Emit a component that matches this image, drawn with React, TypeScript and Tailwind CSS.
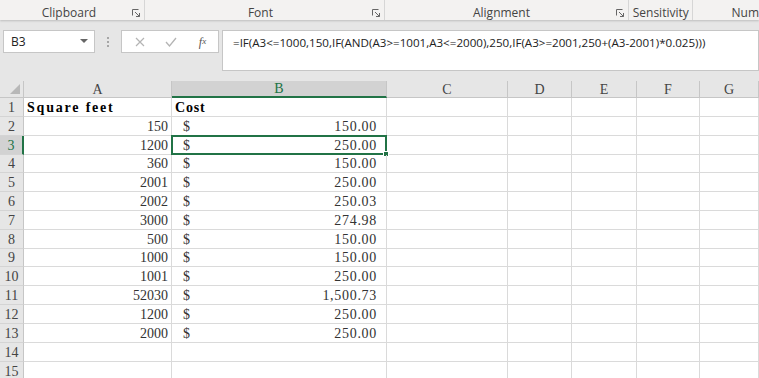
import React from 'react';

const cols = ['A', 'B', 'C', 'D', 'E', 'F', 'G'];
const colW = ['w-[148px]', 'w-[215px]', 'w-[121px]', 'w-[64px]', 'w-[65px]', 'w-[63px]', 'w-[59px]'];
const rowH = [
  'h-[19px]', 'h-[19px]', 'h-[19px]', 'h-[18px]', 'h-[19px]', 'h-[19px]', 'h-[19px]',
  'h-[19px]', 'h-[18px]', 'h-[19px]', 'h-[19px]', 'h-[19px]', 'h-[19px]', 'h-[19px]', 'h-[19px]',
];

const data: [string, string][] = [
  ['150', '150.00'],
  ['1200', '250.00'],
  ['360', '150.00'],
  ['2001', '250.00'],
  ['2002', '250.03'],
  ['3000', '274.98'],
  ['500', '150.00'],
  ['1000', '150.00'],
  ['1001', '250.00'],
  ['52030', '1,500.73'],
  ['1200', '250.00'],
  ['2000', '250.00'],
];

const serif = { fontFamily: '"Liberation Serif", "Times New Roman", serif' };
const ui = { fontFamily: '"Segoe UI", "Open Sans", "Noto Sans", sans-serif' };

function Launcher() {
  return (
    <svg width="9" height="9" viewBox="0 0 9 9" className="text-[#666]">
      <path d="M0.5 0.5h6M0.5 0.5v6" stroke="currentColor" fill="none" />
      <path d="M3 3l4.5 4.5M4 7.5h3.5V4" stroke="currentColor" fill="none" />
    </svg>
  );
}

function Ribbon() {
  return (
    <div className="flex h-[20px] bg-[#f3f2f1] text-[12px] text-[#444] shadow-[0_1px_2px_rgba(0,0,0,0.18)] relative" style={ui}>
      <div className="w-[146px] flex items-center border-r border-[#d6d6d6] pr-[3px] pt-[6px]">
        <span className="flex-1 text-center pl-[6px]">Clipboard</span>
        <Launcher />
      </div>
      <div className="w-[242px] flex items-center border-r border-[#d6d6d6] pr-[3px] pt-[6px]">
        <span className="flex-1 text-center pl-[4px]">Font</span>
        <Launcher />
      </div>
      <div className="w-[246px] flex items-center border-r border-[#d6d6d6] pr-[3px] pt-[6px]">
        <span className="flex-1 text-center pl-[2px]">Alignment</span>
        <Launcher />
      </div>
      <div className="w-[65px] flex items-center justify-center border-r border-[#d6d6d6] pt-[6px]">
        Sensitivity
      </div>
      <div className="flex-1 flex items-center pl-[38px] pt-[6px]">Num</div>
    </div>
  );
}

function FormulaBar() {
  return (
    <div className="flex items-start h-[61px] pt-[10px] pl-[3px] bg-[#e6e6e6] text-[12px] text-[#222]" style={ui}>
      <div className="w-[92px] h-[23px] bg-white border border-[#c6c6c6] flex items-center pl-[7px] pr-[6px]">
        <span className="flex-1">B3</span>
        <svg width="8" height="5" viewBox="0 0 8 5">
          <path d="M0 0h8L4 4z" fill="#666" />
        </svg>
      </div>
      <div className="w-[26px] h-[23px] flex flex-col items-center justify-center gap-[2px]">
        <span className="w-[2px] h-[2px] bg-[#a6a6a6]" />
        <span className="w-[2px] h-[2px] bg-[#a6a6a6]" />
        <span className="w-[2px] h-[2px] bg-[#a6a6a6]" />
      </div>
      <div className="w-[98px] h-[23px] bg-white border border-[#c6c6c6] flex items-center">
        <div className="w-[33px] flex justify-center pl-[2px]">
          <svg width="10" height="10" viewBox="0 0 10 10">
            <path d="M1 1l8 8M9 1l-8 8" stroke="#b4b4b4" strokeWidth="1.2" />
          </svg>
        </div>
        <div className="w-[32px] flex justify-center">
          <svg width="12" height="10" viewBox="0 0 12 10">
            <path d="M1 5l3.5 4L11 1" stroke="#b4b4b4" strokeWidth="1.3" fill="none" />
          </svg>
        </div>
        <div className="w-[31px] flex justify-center text-[#555] italic text-[12px]" style={serif}>
          f<span className="text-[9px] relative top-[2px]">x</span>
        </div>
      </div>
      <div className="ml-[3px] flex-1 h-[41px] bg-white border border-[#c6c6c6] pl-[10px] pt-[3px] text-[11.6px] text-[#222] whitespace-nowrap">
        =IF(A3&lt;=1000,150,IF(AND(A3&gt;=1001,A3&lt;=2000),250,IF(A3&gt;=2001,250+(A3-2001)*0.025)))
      </div>
    </div>
  );
}

function Sheet() {
  return (
    <div className="bg-white" style={serif}>
      <div className="flex h-[17px] bg-[#e6e6e6] text-[14px] text-[#444]">
        <div className="w-[24px] border-r border-b border-[#c6c6c6] relative">
          <svg width="10" height="10" viewBox="0 0 10 10" className="absolute right-[3px] bottom-[3px]">
            <path d="M10 0V10H0z" fill="#b8b8b8" />
          </svg>
        </div>
        {cols.map((c, i) => (
          <div
            key={c}
            className={`${colW[i]} flex items-center justify-center border-r border-[#c6c6c6] ${
              c === 'B' ? 'bg-[#d2d2d2] text-[#217346] border-b-2 border-b-[#217346]' : 'border-b'
            }`}
          >
            {c}
          </div>
        ))}
      </div>
      {rowH.map((h, r) => {
        const n = r + 1;
        const sel = n === 3;
        const d = n >= 2 && n <= 13 ? data[n - 2] : null;
        return (
          <div key={n} className={`flex ${h} text-[14px]`}>
            <div
              className={`w-[24px] flex items-center justify-center border-b border-[#d4d4d4] text-[#444] ${
                sel ? 'bg-[#d2d2d2] text-[#217346] border-r-2 border-r-[#217346]' : 'bg-[#e6e6e6] border-r border-r-[#c6c6c6]'
              }`}
            >
              {n}
            </div>
            <div className="w-[148px] flex items-center border-r border-b border-[#dadada] px-[3px] text-[#333]">
              {n === 1 ? (
                <span className="font-bold text-black tracking-[1.8px]">Square feet</span>
              ) : d ? (
                <span className="ml-auto">{d[0]}</span>
              ) : null}
            </div>
            <div className="w-[215px] flex items-center border-r border-b border-[#dadada] pl-[11px] pr-[9px] text-[#333] relative">
              {n === 1 ? (
                <span className="font-bold text-black tracking-[0.8px] -ml-[8px]">Cost</span>
              ) : d ? (
                <>
                  <span>$</span>
                  <span className="ml-auto tracking-[0.7px]">{d[1]}</span>
                </>
              ) : null}
              {sel && (
                <div className="absolute -left-[1px] -top-[1px] -right-[1px] -bottom-[1px] border-2 border-[#217346]">
                  <div className="absolute -right-[4px] -bottom-[4px] w-[6px] h-[6px] bg-[#217346] border border-white" />
                </div>
              )}
            </div>
            {cols.slice(2).map((c, i) => (
              <div key={c} className={`${colW[i + 2]} border-r border-b border-[#dadada]`} />
            ))}
          </div>
        );
      })}
    </div>
  );
}

export default function App() {
  return (
    <div className="w-[759px] h-[378px] overflow-hidden bg-[#e6e6e6]">
      <Ribbon />
      <FormulaBar />
      <Sheet />
    </div>
  );
}
